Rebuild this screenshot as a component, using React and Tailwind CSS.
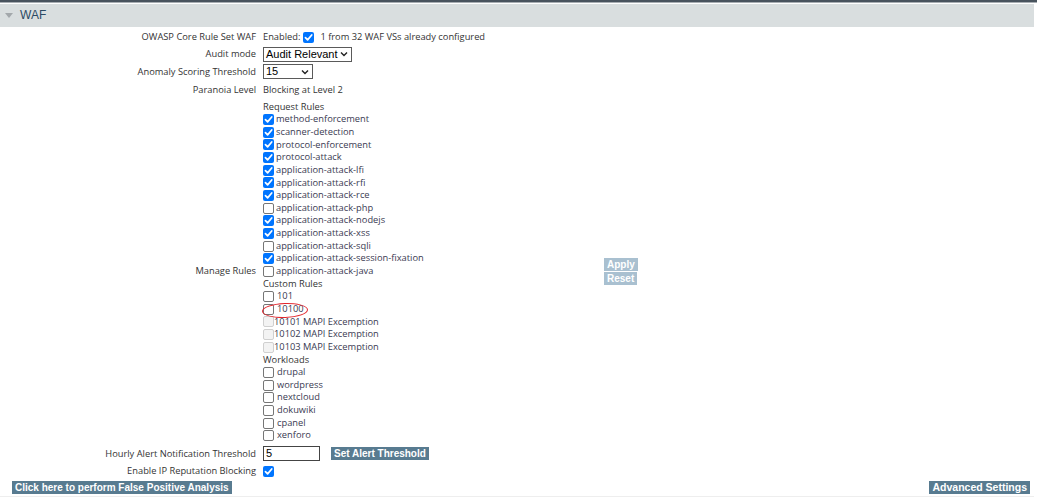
import React from 'react';

const requestRules = [
  ['method-enforcement', true],
  ['scanner-detection', true],
  ['protocol-enforcement', true],
  ['protocol-attack', true],
  ['application-attack-lfi', true],
  ['application-attack-rfi', true],
  ['application-attack-rce', true],
  ['application-attack-php', false],
  ['application-attack-nodejs', true],
  ['application-attack-xss', true],
  ['application-attack-sqli', false],
  ['application-attack-session-fixation', true],
  ['application-attack-java', false],
];

const workloads = ['drupal', 'wordpress', 'nextcloud', 'dokuwiki', 'cpanel', 'xenforo'];

function Box({ checked, disabled }) {
  if (checked) {
    return (
      <span className="w-[11px] h-[11px] shrink-0 rounded-[2px] bg-[#0075ff] flex items-center justify-center">
        <svg width="9" height="9" viewBox="0 0 10 10" fill="none">
          <path d="M1.6 5.2 L4 7.6 L8.6 2.2" stroke="white" strokeWidth="1.9" strokeLinecap="round" strokeLinejoin="round" />
        </svg>
      </span>
    );
  }
  if (disabled) {
    return <span className="w-[11px] h-[11px] shrink-0 rounded-[2px] border border-[#d0d0d0] bg-[#f3f3f3]" />;
  }
  return <span className="w-[11px] h-[11px] shrink-0 rounded-[2px] border border-[#767676] bg-white" />;
}

function Check({ label, checked, disabled, gap = 'gap-[2px]' }) {
  return (
    <div className={`h-[12.65px] flex items-center ${gap}`}>
      <Box checked={checked} disabled={disabled} />
      <span className="text-[#3a3a52]">{label}</span>
    </div>
  );
}

function Chevron() {
  return (
    <svg width="8" height="6" viewBox="0 0 8 6" fill="none">
      <path d="M1 1.5 L4 4.5 L7 1.5" stroke="#222" strokeWidth="1.4" />
    </svg>
  );
}

function Select({ value, width }) {
  return (
    <div className={`${width} h-[15px] border border-[#5a5a5a] bg-white flex items-center justify-between pl-[2px] pr-[3px] font-['Liberation_Sans'] text-[11px] text-black`}>
      <span>{value}</span>
      <Chevron />
    </div>
  );
}

function Btn({ children, light }) {
  return (
    <span className={`inline-block font-['Liberation_Sans'] font-bold text-[10px] leading-[13px] px-[3px] text-white ${light ? 'bg-[#a9c0d0]' : 'bg-[#587b90]'}`}>
      {children}
    </span>
  );
}

export default function App() {
  return (
    <div className="w-[1037px] h-[497px] bg-white overflow-hidden font-['Open_Sans',sans-serif] text-[9.3px] text-[#333] flex flex-col">
      {/* Section header */}
      <div className="h-[2px] bg-[#48535d]" />
      <div className="h-[1px] bg-[#a7adb2]" />
      <div className="h-[1px] bg-white" />
      <div className="h-[25px] bg-[#d9dedf] mr-[3px] flex items-center pl-[5px] gap-[7px]">
        <svg width="8" height="5" viewBox="0 0 8 5">
          <path d="M0 0 L8 0 L4 5 Z" fill="#a3a8ab" />
        </svg>
        <span className="font-['Liberation_Sans'] text-[12px] text-[#2c4a63]">WAF</span>
      </div>

      <div className="grid grid-cols-[256px_348px_1fr] mt-[2px]">
        <div className="h-[17px] flex items-center justify-end">OWASP Core Rule Set WAF</div>
        <div className="h-[17px] flex items-center pl-[7px] gap-[3px]">
          <span>Enabled:</span>
          <Box checked />
          <span className="ml-[3px]">1 from 32 WAF VSs already configured</span>
        </div>
        <div />

        <div className="h-[17px] flex items-center justify-end">Audit mode</div>
        <div className="h-[17px] flex items-center pl-[7px]">
          <Select value="Audit Relevant" width="w-[89px]" />
        </div>
        <div />

        <div className="h-[18px] flex items-center justify-end">Anomaly Scoring Threshold</div>
        <div className="h-[18px] flex items-center pl-[7px]">
          <Select value="15" width="w-[50px]" />
        </div>
        <div />

        <div className="h-[18px] flex items-center justify-end">Paranoia Level</div>
        <div className="h-[18px] flex items-center pl-[7px]">Blocking at Level 2</div>
        <div />

        <div className="flex items-center justify-end pt-[2px]">Manage Rules</div>
        <div className="pl-[7px] pt-[2px] leading-[12.65px]">
          <div className="h-[12.65px] flex items-center">Request Rules</div>
          {requestRules.map(([name, on]) => (
            <Check key={name} label={name} checked={on} />
          ))}
          <div className="h-[12.65px] flex items-center">Custom Rules</div>
          <Check label="101" gap="gap-[3px]" />
          <div className="relative">
            <Check label="10100" gap="gap-[3px]" />
            <span className="absolute left-[-1px] top-[0px] w-[46px] h-[15px] rounded-[50%] border-[1.5px] border-[#e3262d] -rotate-2" />
          </div>
          <Check label="10101 MAPI Excemption" disabled gap="gap-[-1px]" />
          <Check label="10102 MAPI Excemption" disabled gap="gap-[-1px]" />
          <Check label="10103 MAPI Excemption" disabled gap="gap-[-1px]" />
          <div className="h-[12.65px] flex items-center">Workloads</div>
          {workloads.map((w) => (
            <Check key={w} label={w} gap="gap-[3px]" />
          ))}
        </div>
        <div className="flex flex-col justify-center items-start gap-[1px] pt-[2px]">
          <Btn light>Apply</Btn>
          <Btn light>Reset</Btn>
        </div>

        <div className="h-[23px] flex items-center justify-end">Hourly Alert Notification Threshold</div>
        <div className="h-[23px] flex items-center pl-[7px] gap-[11px]">
          <div className="w-[57px] h-[15px] border border-[#444] bg-white font-['Liberation_Sans'] text-[11px] text-black leading-[13px] pl-[2px]">5</div>
          <Btn>Set Alert Threshold</Btn>
        </div>
        <div />

        <div className="h-[12px] flex items-center justify-end">Enable IP Reputation Blocking</div>
        <div className="h-[12px] flex items-center pl-[7px]">
          <Box checked />
        </div>
        <div />
      </div>

      <div className="flex justify-between items-center pl-[12px] pr-[4px] mt-[4px] pb-[2px] border-b border-[#eeeeee] mr-[3px]">
        <Btn>Click here to perform False Positive Analysis</Btn>
        <span className="inline-block font-['Liberation_Sans'] font-bold text-[10.5px] leading-[13px] px-[3px] text-white bg-[#587b90]">Advanced Settings</span>
      </div>
    </div>
  );
}
